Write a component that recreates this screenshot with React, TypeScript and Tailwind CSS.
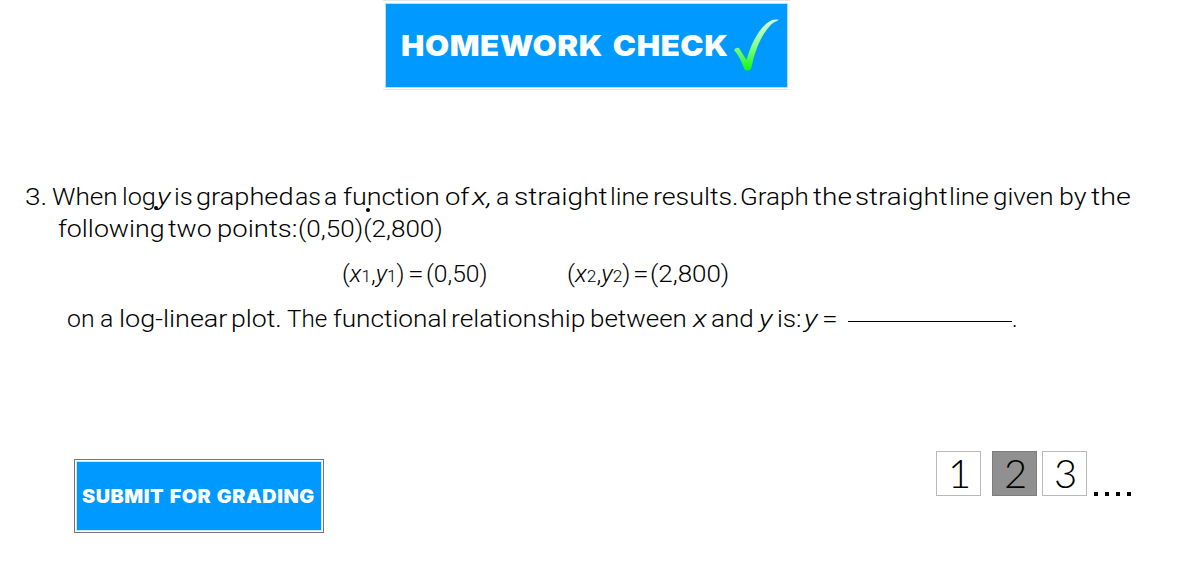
import { useLayoutEffect, useRef, useState, type ReactNode } from 'react'

type Word = {
  text: ReactNode
  width: number
  gap: number
  italic?: boolean
}

// word, rendered width, space in front of it
const w = (text: string, width: number, gap: number, italic = false): Word => ({
  text,
  width,
  gap,
  italic,
})

const pair = (n: string, width: number, gap: number): Word => ({
  text: (
    <>
      (<i>x</i>
      <span className="text-[16px]">{n}</span>,<i>y</i>
      <span className="text-[16px]">{n}</span>)
    </>
  ),
  width,
  gap,
})

const firstLine = [
  w('3.', 22, 25), w('When', 66, 5), w('log', 34, 4), w('y', 14, 1, true), w('is', 19, 3),
  w('graphed', 97, 3), w('as', 26, 2), w('a', 13, 3), w('function', 97, 6), w('of', 25, 5),
  w('x,', 20, 2, true), w('a', 13, 4), w('straight', 94, 5), w('line', 39, 2),
  w('results.', 85, 4), w('Graph', 69, 2), w('the', 39, 4), w('straight', 93, 3),
  w('line', 40, 1), w('given', 60, 4), w('by', 28, 6), w('the', 40, 4),
]

const secondLine = [
  w('following', 107, 58), w('two', 44, 3), w('points:', 80, 5), w('(0,50)(2,800)', 145, 1),
]

const pointsLine = [
  pair('1', 63, 342), w('=', 16, 3), w('(0,50)', 62, 2),
  pair('2', 64, 79), w('=', 16, 2), w('(2,800)', 79, 1),
]

const lastLine = [
  w('on', 28, 67), w('a', 13, 5), w('log-linear', 108, 6), w('plot.', 51, 4), w('The', 40, 5),
  w('functional', 114, 6), w('relationship', 134, 4), w('between', 97, 5), w('x', 14, 6, true),
  w('and', 43, 4), w('y', 14, 5, true), w('is:', 25, 4), w('y', 14, 2, true), w('=', 16, 4),
]

// Stretches the text sideways to the given width
function FitText({ children, width, className = '' }: {
  children: ReactNode
  width: number
  className?: string
}) {
  const ref = useRef<HTMLSpanElement>(null)
  const [scale, setScale] = useState(1)

  useLayoutEffect(() => {
    if (!ref.current) return
    setScale(width / ref.current.offsetWidth)
  }, [width])

  return (
    <span
      ref={ref}
      className={`inline-block origin-left whitespace-nowrap ${className}`}
      style={{ transform: `scaleX(${scale})` }}
    >
      {children}
    </span>
  )
}

function Line({ words, children }: { words: Word[]; children?: ReactNode }) {
  return (
    <div className="flex h-8 items-baseline leading-8">
      {words.map((word, i) => (
        <div key={i} className="shrink-0" style={{ width: word.width, marginLeft: word.gap }}>
          <FitText width={word.width} className={word.italic ? 'italic' : ''}>
            {word.text}
          </FitText>
        </div>
      ))}
      {children}
    </div>
  )
}

function CheckMark() {
  return (
    <svg width="46" height="52" viewBox="0 0 46 52" className="shrink-0">
      <defs>
        <linearGradient id="check" x1="0" y1="0" x2="0" y2="1">
          <stop offset="0" stopColor="#d4ffd4" />
          <stop offset="0.5" stopColor="#8bff8b" />
          <stop offset="1" stopColor="#12f712" />
        </linearGradient>
      </defs>
      <path
        d="M0 31 Q2 28 5 29 Q8 34 12.500 41 C18 22 27 6 38 1 Q41 0 45 .8 L42 2.500 Q39 3 35 8 C27 17 21 31 17.500 48 Q17 52 12.500 51.500 Q10.500 51.500 9.500 48 Q6 38 0 31Z"
        fill="url(#check)"
      />
    </svg>
  )
}

function PageBox({ label, active }: { label: string; active?: boolean }) {
  return (
    <button
      className={`flex h-[45px] w-[45px] items-center justify-center border pb-px pl-[2px] font-['Lato',sans-serif] text-[40px] leading-none font-light text-black ${
        active ? 'border-[#7d7d7d] bg-[#909090]' : 'border-[#b9b9b9] bg-white'
      }`}
    >
      {label}
    </button>
  )
}

export default function App() {
  return (
    <div className="flex h-[570px] w-[1180px] flex-col overflow-hidden bg-white text-black">
      <header className="ml-[383px] h-[90px] w-[407px] border-t border-b border-[#e6e6e6] px-[2px] pt-[2px]">
        <div className="flex h-[85px] w-[403px] border border-[#b5dfff] bg-[#0099ff]">
          <h1 className="ml-[15px] w-[327px] pt-[25px] font-['Inter',sans-serif] text-[29px] leading-[34px] font-black text-white">
            <FitText width={327} className="tracking-[0.5px] [word-spacing:3px]">HOMEWORK CHECK</FitText>
          </h1>
          <div className="ml-[6px] pt-[15px]">
            <CheckMark />
          </div>
        </div>
      </header>

      <main className="relative mt-[92px] h-[160px] font-['Roboto',sans-serif] text-[23px] font-light">
        <Line words={firstLine} />
        <Line words={secondLine} />
        <div className="mt-[13px]">
          <Line words={pointsLine} />
        </div>
        <div className="mt-[13px]">
          <Line words={lastLine}>
            <span className="mb-[14px] ml-[10px] h-px w-[164px] self-end bg-black" />
            <span>.</span>
          </Line>
        </div>
        <span className="absolute top-[24px] left-[154px] h-1 w-1 rounded-full bg-black" />
        <span className="absolute top-[26px] left-[366px] h-1 w-1 rounded-full bg-black" />
      </main>

      <footer className="mt-[109px] flex items-start">
        <button className="mt-2 ml-[74px] h-[74px] w-[250px] border border-[#777] p-px">
          <span className="flex h-full w-full border border-[#c5e6ff] bg-[#0099ff] pt-[22px] pl-[5px] font-['Inter',sans-serif] text-[18.500px] leading-6 font-black text-white">
            <FitText width={233} className="tracking-[0.5px] [word-spacing:1px]">SUBMIT FOR GRADING</FitText>
          </span>
        </button>
        <nav className="ml-[612px] flex">
          <PageBox label="1" />
          <div className="ml-[11px]">
            <PageBox label="2" active />
          </div>
          <div className="ml-[5px]">
            <PageBox label="3" />
          </div>
          <div className="ml-[7px] flex gap-[7px] pt-[41px]">
            {[0, 1, 2, 3].map(dot => (
              <span key={dot} className="h-1 w-1 bg-black" />
            ))}
          </div>
        </nav>
      </footer>
    </div>
  )
}
